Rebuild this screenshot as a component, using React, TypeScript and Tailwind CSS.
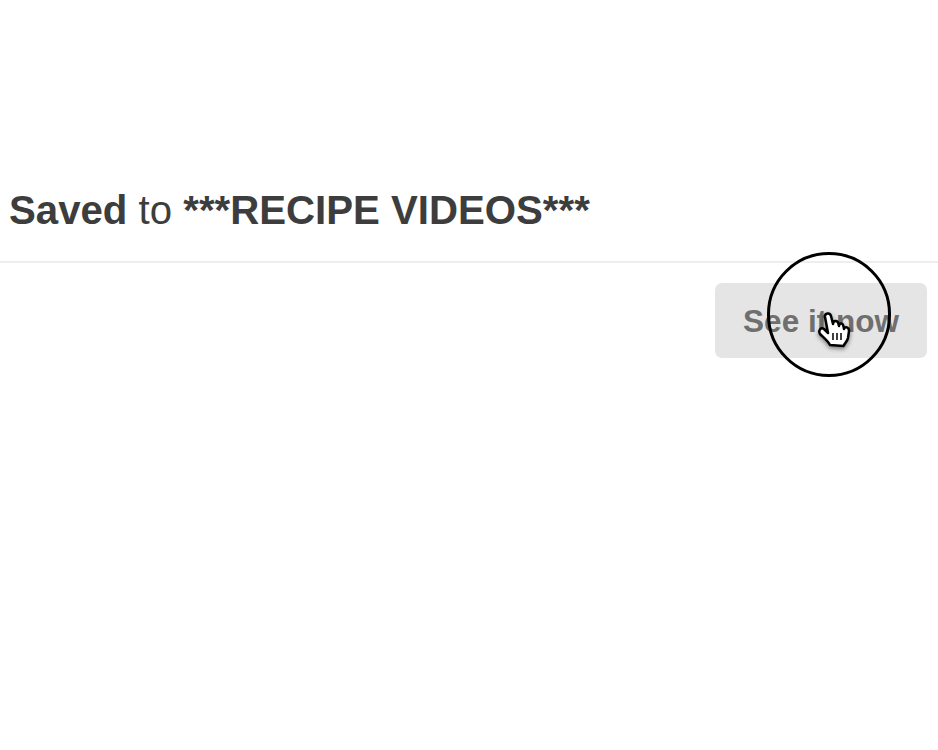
export default function App() {
  return (
    <div className="relative h-[750px] w-[938px] overflow-hidden bg-white font-['Liberation_Sans',Arial,sans-serif]">
      <div className="flex h-[263px] items-end border-b-2 border-[#eeeeee] pb-[27px] pl-[9px]">
        <h1 className="text-[40.2px] leading-[46px] text-[#3d3d3d]">
          <span className="font-bold">Saved</span> <span className="font-normal">to</span> <span className="font-bold">***RECIPE VIDEOS***</span>
        </h1>
      </div>
      <div className="flex justify-end pr-[11px] pt-[20px]">
        <button className="h-[75px] w-[212px] rounded-[7px] bg-[#e5e5e5] pt-[2px] text-[31.5px] font-bold text-[#6f6f6f]">See it now</button>
      </div>
      <div className="absolute left-[767px] top-[252px] h-[125px] w-[124px] rounded-full border-[3px] border-black" />
      <svg className="absolute left-[815px] top-[308px] drop-shadow-[0_2px_2px_rgba(0,0,0,0.45)]" width="40" height="44" viewBox="0 0 40 44">
        <path d="M13 25 L10 9 C9.500 5 15 4 16 8 L18 16 C18 12 23 12 23.500 16 L24 18 C24.500 14 28 15 28.500 18.500 L29 21 C30 18 34 19 34 23 L33 30 C32.500 33 30 35 28.500 38 L15 37 C13 33 9 30 5 26 C3 22 6 19 9 21 Z" fill="#ffffff" stroke="#000000" strokeWidth="2.500" strokeLinejoin="round" />
        <path d="M18 25V32M22 25V32M26 25V32" stroke="#000000" strokeWidth="1.500" fill="none" />
      </svg>
    </div>
  );
}
